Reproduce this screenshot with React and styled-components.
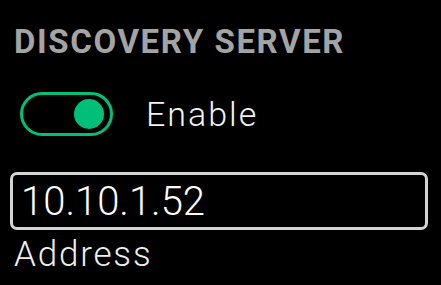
import React from 'react';
import styled, { createGlobalStyle } from 'styled-components';

const GlobalStyle = createGlobalStyle`
  html, body {
    margin: 0;
    padding: 0;
    background: #000;
  }
  body {
    font-family: Roboto, "Liberation Sans", sans-serif;
  }
`;

const Panel = styled.div`
  width: 441px;
  height: 285px;
  box-sizing: border-box;
  padding: 22px 13px 0 10px;
  display: flex;
  flex-direction: column;
  background: #000;
`;

const Title = styled.div`
  padding-left: 4px;
  font-size: 33px;
  line-height: 40px;
  font-weight: 700;
  color: #a4a4a4;
  letter-spacing: 1.6px;
`;

const ToggleRow = styled.div`
  display: flex;
  align-items: center;
  gap: 33px;
  margin-top: 30px;
  padding-left: 10px;
`;

const Track = styled.div`
  width: 93px;
  height: 44px;
  box-sizing: border-box;
  border: 3px solid ${p => (p.$on ? '#00bf78' : '#777')};
  border-radius: 22px;
  display: flex;
  align-items: center;
  justify-content: ${p => (p.$on ? 'flex-end' : 'flex-start')};
  padding: 0 6px;
`;

const Knob = styled.div`
  width: 30px;
  height: 30px;
  border-radius: 50%;
  background: ${p => (p.$on ? '#00bf78' : '#777')};
`;

const ToggleLabel = styled.span`
  font-size: 34px;
  font-weight: 300;
  color: #f2f2f2;
  letter-spacing: 2px;
`;

const Field = styled.div`
  margin-top: 36px;
  height: 58px;
  box-sizing: border-box;
  border: 3px solid #d4d4d4;
  border-radius: 7px;
  display: flex;
  align-items: center;
  padding-left: 8px;
  font-size: 40px;
  font-weight: 300;
  color: #fff;
`;

const FieldLabel = styled.div`
  padding-left: 4px;
  margin-top: 5px;
  font-size: 35px;
  line-height: 40px;
  font-weight: 300;
  color: #eee;
  letter-spacing: 1.8px;
`;

export default function App() {
  return (
    <>
      <GlobalStyle />
      <Panel>
        <Title>DISCOVERY SERVER</Title>
        <ToggleRow>
          <Track $on>
            <Knob $on />
          </Track>
          <ToggleLabel>Enable</ToggleLabel>
        </ToggleRow>
        <Field>10.10.1.52</Field>
        <FieldLabel>Address</FieldLabel>
      </Panel>
    </>
  );
}
